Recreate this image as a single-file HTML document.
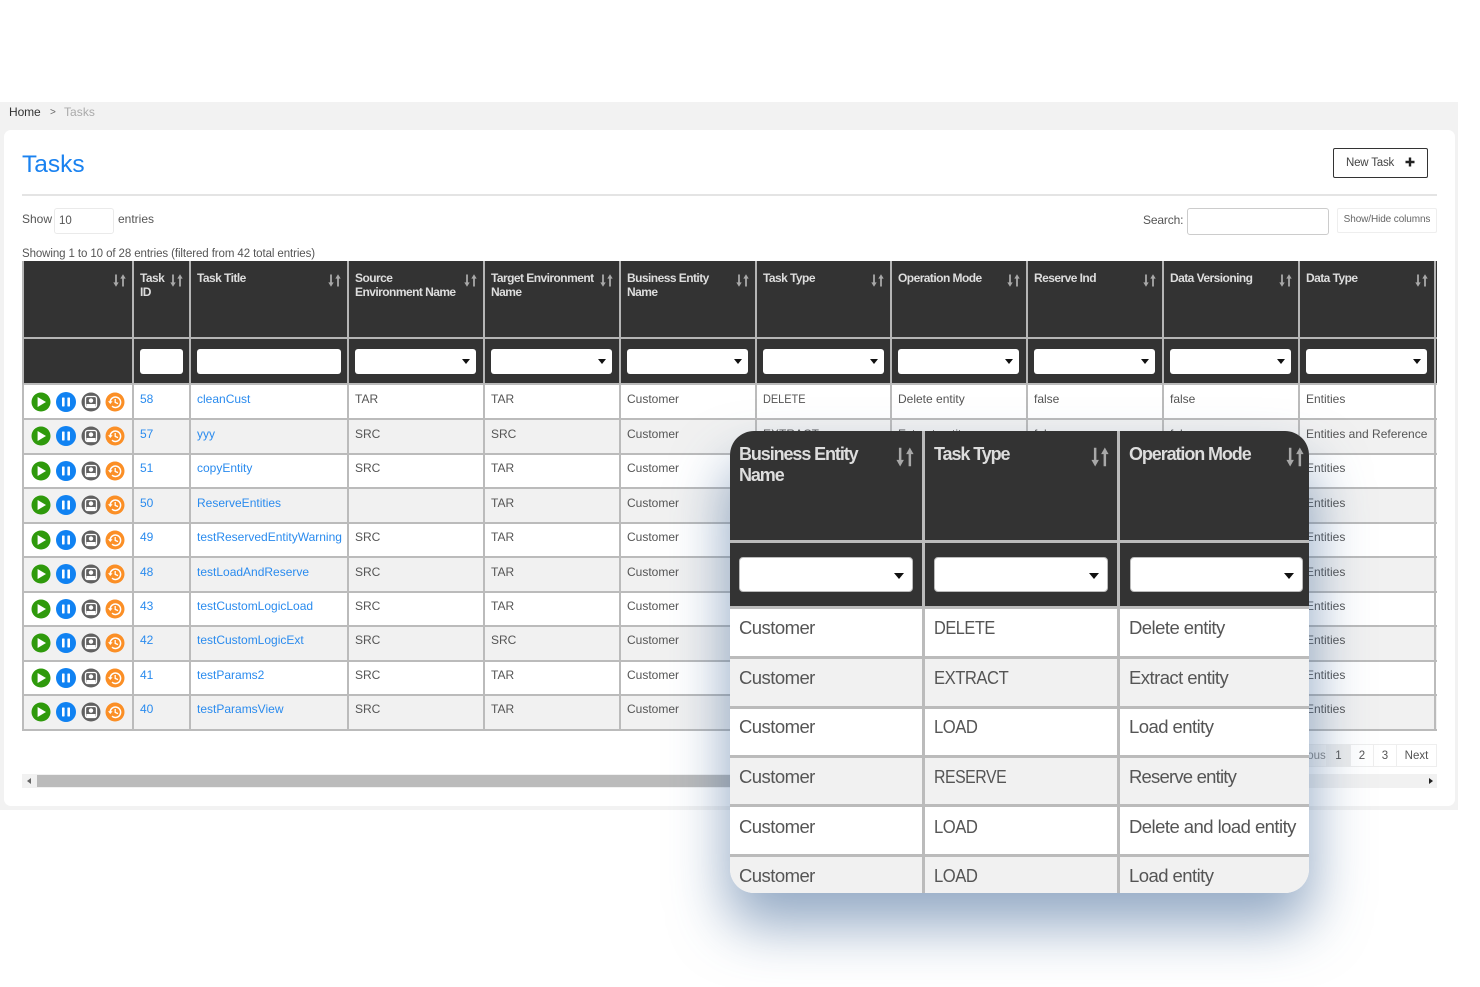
<!DOCTYPE html>
<html lang="en"><head><meta charset="utf-8"><title>Tasks</title>
<style>
*{box-sizing:border-box}
html,body{margin:0;padding:0;width:1480px;height:987px;overflow:hidden;background:#fff}
body{position:relative;font-family:"Liberation Sans",sans-serif;font-size:12px;color:#555}
.a{position:absolute;white-space:nowrap}
#band{left:0;top:102px;width:1458px;height:708px;background:#f2f2f2}
#card{left:4px;top:130px;width:1451px;height:676px;background:#fff;border-radius:7px}
table{position:absolute;left:22px;top:261px;width:1415px;border-collapse:separate;border-spacing:0;table-layout:fixed}
th{background:#333;color:#ddd;text-align:left;vertical-align:top;font-size:12px;font-weight:bold;letter-spacing:-.55px;line-height:14px;padding:10px 8px 0 6px;border-left:2px solid #b5b5b5;border-bottom:2px solid #b5b5b5;position:relative}
tr.f th{padding:0;border-bottom:2px solid #bbb}
td{border-left:2px solid #bbb;border-bottom:2px solid #bbb;padding:7px 0 0 6px;vertical-align:top;line-height:14px;white-space:nowrap;overflow:hidden;color:#555}
tr.u td{padding-top:6px}
tr.g td{background:#f1f1f1}
tr.w td{background:#fff}
td a{color:#2a8bee;text-decoration:none}
td.i,tr.u td.i{padding:0;position:relative}
td.i svg{position:absolute;left:5px;top:5px}
tr.w1 td.i svg{top:6px}
.s{position:absolute;right:6px;top:13px;width:13px;height:13px}
.sel{position:absolute;left:6px;top:10px;height:25px;background:#fff;border-radius:3px;width:121px}
.sel:after{content:"";position:absolute;right:6px;top:10px;border:4px solid transparent;border-top:5px solid #111;border-bottom:0}
.in:after{display:none}
#ov{left:730px;top:431px;width:579px;height:462px;border-radius:24px;overflow:hidden;background:#fff;font-size:18.5px;color:#555;letter-spacing:-.55px;z-index:3}
#sh{left:733px;top:440px;width:573px;height:450px;border-radius:24px;box-shadow:0 30px 56px 6px rgba(60,100,150,.55);z-index:2}
#ov .r{position:absolute;left:0;width:579px}
#ov .t{position:absolute;white-space:nowrap;line-height:22px;transform-origin:0 50%}
#ov .v{position:absolute;top:0;height:462px;width:3px;background:#bbb}
#ov .l{position:absolute;left:0;width:579px;height:3px;background:#bbb}
#ov .h{position:absolute;color:#ddd;font-weight:bold;line-height:20.5px;font-size:18px;letter-spacing:-1.1px;white-space:nowrap}
.os{position:absolute;top:126px;height:35px;background:#fff;border-radius:4px;border:1px solid #bbb}
.os:after{content:"";position:absolute;right:8px;top:15px;border:5.5px solid transparent;border-top:6px solid #111;border-bottom:0}
.ss{position:absolute;top:16px;width:18px;height:20px}
.pg{top:744px;height:23px;border:1px solid #eee;border-left:0;color:#555;text-align:center;line-height:22px;font-size:11.5px;background:#fff}
</style></head><body>
<svg width="0" height="0" style="position:absolute"><defs>
<symbol id="so" viewBox="0 0 13 13"><path d="M2.1 0.5H3.9V8.4H5.7L3 12.7L0.3 8.4H2.1ZM9.1 12.5H10.9V4.6H12.7L10 0.3L7.3 4.6H9.1Z" fill="#a8a8a8"/></symbol>
<symbol id="ic" viewBox="0 0 100 22">
<circle cx="12" cy="11" r="9.5" fill="#2f9a0c"/><path d="M8.6 6L17 11L8.6 16Z" fill="#fff"/>
<circle cx="37" cy="11" r="10" fill="#1082f2"/><rect x="33" y="6.5" width="2.6" height="9" rx=".6" fill="#fff"/><rect x="38.4" y="6.5" width="2.6" height="9" rx=".6" fill="#fff"/>
<circle cx="62" cy="11" r="9.5" fill="#616161"/><rect x="56.5" y="5.5" width="11" height="11" rx="2" fill="none" stroke="#fff" stroke-width="1.3"/><circle cx="62" cy="9.6" r="2.2" fill="#fff"/><rect x="57.5" y="13" width="9" height="3" fill="#fff"/>
<circle cx="86" cy="11" r="9.5" fill="#fb8f26"/><path d="M81.2 11A5.2 5.2 0 1 1 83 15.2" fill="none" stroke="#fff" stroke-width="1.5"/><path d="M79 10.2L81.3 13L83.6 10.2Z" fill="#fff"/><path d="M86.2 8V11.4L89 12.6" fill="none" stroke="#fff" stroke-width="1.3"/>
</symbol></defs></svg>

<div class="a" id="band"></div>
<div class="a" id="card"></div>
<div class="a" style="left:9px;top:105px;color:#333;letter-spacing:-.1px;line-height:15px">Home</div>
<div class="a" style="left:50px;top:105px;color:#666;font-size:10px;line-height:15px">&gt;</div>
<div class="a" style="left:64px;top:105px;color:#aaa;line-height:15px;letter-spacing:.05px">Tasks</div>
<div class="a" style="left:22px;top:150px;font-size:24.5px;line-height:30px;color:#1a82f0">Tasks</div>
<div class="a" style="left:1333px;top:148px;width:95px;height:30px;border:1px solid #333;border-radius:2px;color:#444;font-size:11.5px;line-height:28px;padding-left:12px;letter-spacing:-.2px">New Task</div>
<svg class="a" style="left:1405px;top:157px" width="10" height="10"><path d="M5 0.5V9.5M.5 5H9.5" stroke="#222" stroke-width="2.4"/></svg>
<div class="a" style="left:22px;top:194px;width:1415px;height:1.5px;background:#e4e4e4"></div>
<div class="a" style="left:22px;top:212px;line-height:15px">Show</div>
<div class="a" style="left:54px;top:208px;width:60px;height:26px;border:1px solid #eaeaea;border-radius:3px;line-height:25px;padding-left:4px;font-size:11.5px">10</div>
<div class="a" style="left:118px;top:212px;line-height:15px">entries</div>
<div class="a" style="left:22px;top:247px;line-height:14px;letter-spacing:-.1px;font-size:11.5px">Showing 1 to 10 of 28 entries (filtered from 42 total entries)</div>
<div class="a" style="left:1143px;top:213px;line-height:15px;letter-spacing:-.15px">Search:</div>
<div class="a" style="left:1187px;top:208px;width:142px;height:27px;border:1px solid #ccc;border-radius:3px"></div>
<div class="a" style="left:1337px;top:208px;width:100px;height:25px;border:1px solid #eee;border-radius:2px;font-size:10px;line-height:22px;text-align:center;color:#666;letter-spacing:-.1px">Show/Hide columns</div>

<table>
<colgroup><col style="width:110px"><col style="width:57px"><col style="width:158px"><col style="width:136px"><col style="width:136px"><col style="width:136px"><col style="width:135px"><col style="width:136px"><col style="width:136px"><col style="width:136px"><col style="width:136px"><col style="width:3px"></colgroup>
<tr style="height:78px">
<th><svg class="s"><use href="#so"/></svg></th>
<th>Task<br>ID<svg class="s"><use href="#so"/></svg></th>
<th>Task Title<svg class="s"><use href="#so"/></svg></th>
<th>Source<br>Environment Name<svg class="s"><use href="#so"/></svg></th>
<th>Target Environment<br>Name<svg class="s"><use href="#so"/></svg></th>
<th>Business Entity<br>Name<svg class="s"><use href="#so"/></svg></th>
<th>Task Type<svg class="s"><use href="#so"/></svg></th>
<th>Operation Mode<svg class="s"><use href="#so"/></svg></th>
<th>Reserve Ind<svg class="s"><use href="#so"/></svg></th>
<th>Data Versioning<svg class="s"><use href="#so"/></svg></th>
<th>Data Type<svg class="s"><use href="#so"/></svg></th>
<th></th></tr>
<tr class="f" style="height:46px">
<th></th>
<th><div class="sel in" style="width:43px"></div></th>
<th><div class="sel in" style="width:144px"></div></th>
<th><div class="sel"></div></th><th><div class="sel"></div></th><th><div class="sel"></div></th><th><div class="sel"></div></th><th><div class="sel"></div></th><th><div class="sel"></div></th><th><div class="sel"></div></th><th><div class="sel"></div></th><th></th></tr>
<tr class="w w1" style="height:35px"><td class="i"><svg width="100" height="22"><use href="#ic"/></svg></td><td><a>58</a></td><td><a>cleanCust</a></td><td>TAR</td><td>TAR</td><td>Customer</td><td><span style="display:inline-block;transform:scaleX(.91);transform-origin:0 50%">DELETE</span></td><td>Delete entity</td><td>false</td><td>false</td><td>Entities</td><td></td></tr>
<tr class="g" style="height:35px"><td class="i"><svg width="100" height="22"><use href="#ic"/></svg></td><td><a>57</a></td><td><a>yyy</a></td><td>SRC</td><td>SRC</td><td>Customer</td><td>EXTRACT</td><td>Extract entity</td><td>false</td><td>false</td><td>Entities and Reference</td><td></td></tr>
<tr class="w u" style="height:34px"><td class="i"><svg width="100" height="22"><use href="#ic"/></svg></td><td><a>51</a></td><td><a>copyEntity</a></td><td>SRC</td><td>TAR</td><td>Customer</td><td>LOAD</td><td>Load entity</td><td>false</td><td>false</td><td>Entities</td><td></td></tr>
<tr class="g" style="height:35px"><td class="i"><svg width="100" height="22"><use href="#ic"/></svg></td><td><a>50</a></td><td><a>ReserveEntities</a></td><td></td><td>TAR</td><td>Customer</td><td>RESERVE</td><td>Reserve entity</td><td>true</td><td>false</td><td>Entities</td><td></td></tr>
<tr class="w u" style="height:34px"><td class="i"><svg width="100" height="22"><use href="#ic"/></svg></td><td><a>49</a></td><td><a>testReservedEntityWarning</a></td><td>SRC</td><td>TAR</td><td>Customer</td><td>LOAD</td><td>Delete and load entity</td><td>true</td><td>false</td><td>Entities</td><td></td></tr>
<tr class="g" style="height:35px"><td class="i"><svg width="100" height="22"><use href="#ic"/></svg></td><td><a>48</a></td><td><a>testLoadAndReserve</a></td><td>SRC</td><td>TAR</td><td>Customer</td><td>LOAD</td><td>Load entity</td><td>true</td><td>false</td><td>Entities</td><td></td></tr>
<tr class="w u" style="height:34px"><td class="i"><svg width="100" height="22"><use href="#ic"/></svg></td><td><a>43</a></td><td><a>testCustomLogicLoad</a></td><td>SRC</td><td>TAR</td><td>Customer</td><td>LOAD</td><td>Load entity</td><td>false</td><td>false</td><td>Entities</td><td></td></tr>
<tr class="g u" style="height:35px"><td class="i"><svg width="100" height="22"><use href="#ic"/></svg></td><td><a>42</a></td><td><a>testCustomLogicExt</a></td><td>SRC</td><td>SRC</td><td>Customer</td><td>EXTRACT</td><td>Extract entity</td><td>false</td><td>false</td><td>Entities</td><td></td></tr>
<tr class="w u" style="height:34px"><td class="i"><svg width="100" height="22"><use href="#ic"/></svg></td><td><a>41</a></td><td><a>testParams2</a></td><td>SRC</td><td>TAR</td><td>Customer</td><td>LOAD</td><td>Load entity</td><td>false</td><td>false</td><td>Entities</td><td></td></tr>
<tr class="g u" style="height:35px"><td class="i"><svg width="100" height="22"><use href="#ic"/></svg></td><td><a>40</a></td><td><a>testParamsView</a></td><td>SRC</td><td>TAR</td><td>Customer</td><td>LOAD</td><td>Load entity</td><td>false</td><td>false</td><td>Entities</td><td></td></tr>
</table>

<div class="a pg" style="left:1280px;width:47px;border-left:1px solid #eee;background:#f4f4f4;color:#888;padding-right:10px;overflow:hidden">Previous</div>
<div class="a pg" style="left:1327px;width:24px;background:#eee">1</div>
<div class="a pg" style="left:1351px;width:23px">2</div>
<div class="a pg" style="left:1374px;width:23px">3</div>
<div class="a pg" style="left:1397px;width:40px">Next</div>

<div class="a" style="left:22px;top:774px;width:1415px;height:14px;background:#f1f1f1"></div>
<div class="a" style="left:37px;top:775px;width:1260px;height:12px;background:#bbb"></div>
<div class="a" style="left:27px;top:778px;border:3px solid transparent;border-right:4px solid #666;border-left:0"></div>
<div class="a" style="left:1429px;top:778px;border:3px solid transparent;border-left:4px solid #222;border-right:0"></div>

<div class="a" id="sh"></div>
<div class="a" id="ov">
 <div class="r" style="top:0;height:175px;background:#333"></div>
 <div class="r" style="top:177px;height:49px;background:#fff"></div>
 <div class="r" style="top:226px;height:50px;background:#f1f1f1"></div>
 <div class="r" style="top:276px;height:50px;background:#fff"></div>
 <div class="r" style="top:326px;height:50px;background:#f1f1f1"></div>
 <div class="r" style="top:376px;height:50px;background:#fff"></div>
 <div class="r" style="top:426px;height:36px;background:#f1f1f1"></div>
 <div class="v" style="left:192px"></div><div class="v" style="left:387px"></div>
 <div class="l" style="top:109px"></div><div class="l" style="top:175px"></div><div class="l" style="top:225px"></div><div class="l" style="top:275px"></div><div class="l" style="top:324px"></div><div class="l" style="top:373px"></div><div class="l" style="top:423px"></div>

 <div class="h" style="left:9px;top:13px">Business Entity<br>Name</div>
 <div class="h" style="left:204px;top:13px">Task Type</div>
 <div class="h" style="left:399px;top:13px">Operation Mode</div>
 <svg class="ss" style="left:166px" viewBox="0 0 13 13" preserveAspectRatio="none"><use href="#so"/></svg>
 <svg class="ss" style="left:361px" viewBox="0 0 13 13" preserveAspectRatio="none"><use href="#so"/></svg>
 <svg class="ss" style="left:556px" viewBox="0 0 13 13" preserveAspectRatio="none"><use href="#so"/></svg>
 <div class="os" style="left:9px;width:174px"></div><div class="os" style="left:204px;width:174px"></div><div class="os" style="left:400px;width:173px"></div>

 <div class="t" style="left:9px;top:186px">Customer</div><div class="t" style="left:204px;top:186px;transform:scaleX(.885)">DELETE</div><div class="t" style="left:399px;top:186px">Delete entity</div>
 <div class="t" style="left:9px;top:236px">Customer</div><div class="t" style="left:204px;top:236px;transform:scaleX(.9)">EXTRACT</div><div class="t" style="left:399px;top:236px">Extract entity</div>
 <div class="t" style="left:9px;top:285px">Customer</div><div class="t" style="left:204px;top:285px;transform:scaleX(.9)">LOAD</div><div class="t" style="left:399px;top:285px">Load entity</div>
 <div class="t" style="left:9px;top:335px">Customer</div><div class="t" style="left:204px;top:335px;transform:scaleX(.857)">RESERVE</div><div class="t" style="left:399px;top:335px;letter-spacing:-.8px">Reserve entity</div>
 <div class="t" style="left:9px;top:385px">Customer</div><div class="t" style="left:204px;top:385px;transform:scaleX(.9)">LOAD</div><div class="t" style="left:399px;top:385px">Delete and load entity</div>
 <div class="t" style="left:9px;top:434px">Customer</div><div class="t" style="left:204px;top:434px;transform:scaleX(.9)">LOAD</div><div class="t" style="left:399px;top:434px">Load entity</div>
</div>
</body></html>
